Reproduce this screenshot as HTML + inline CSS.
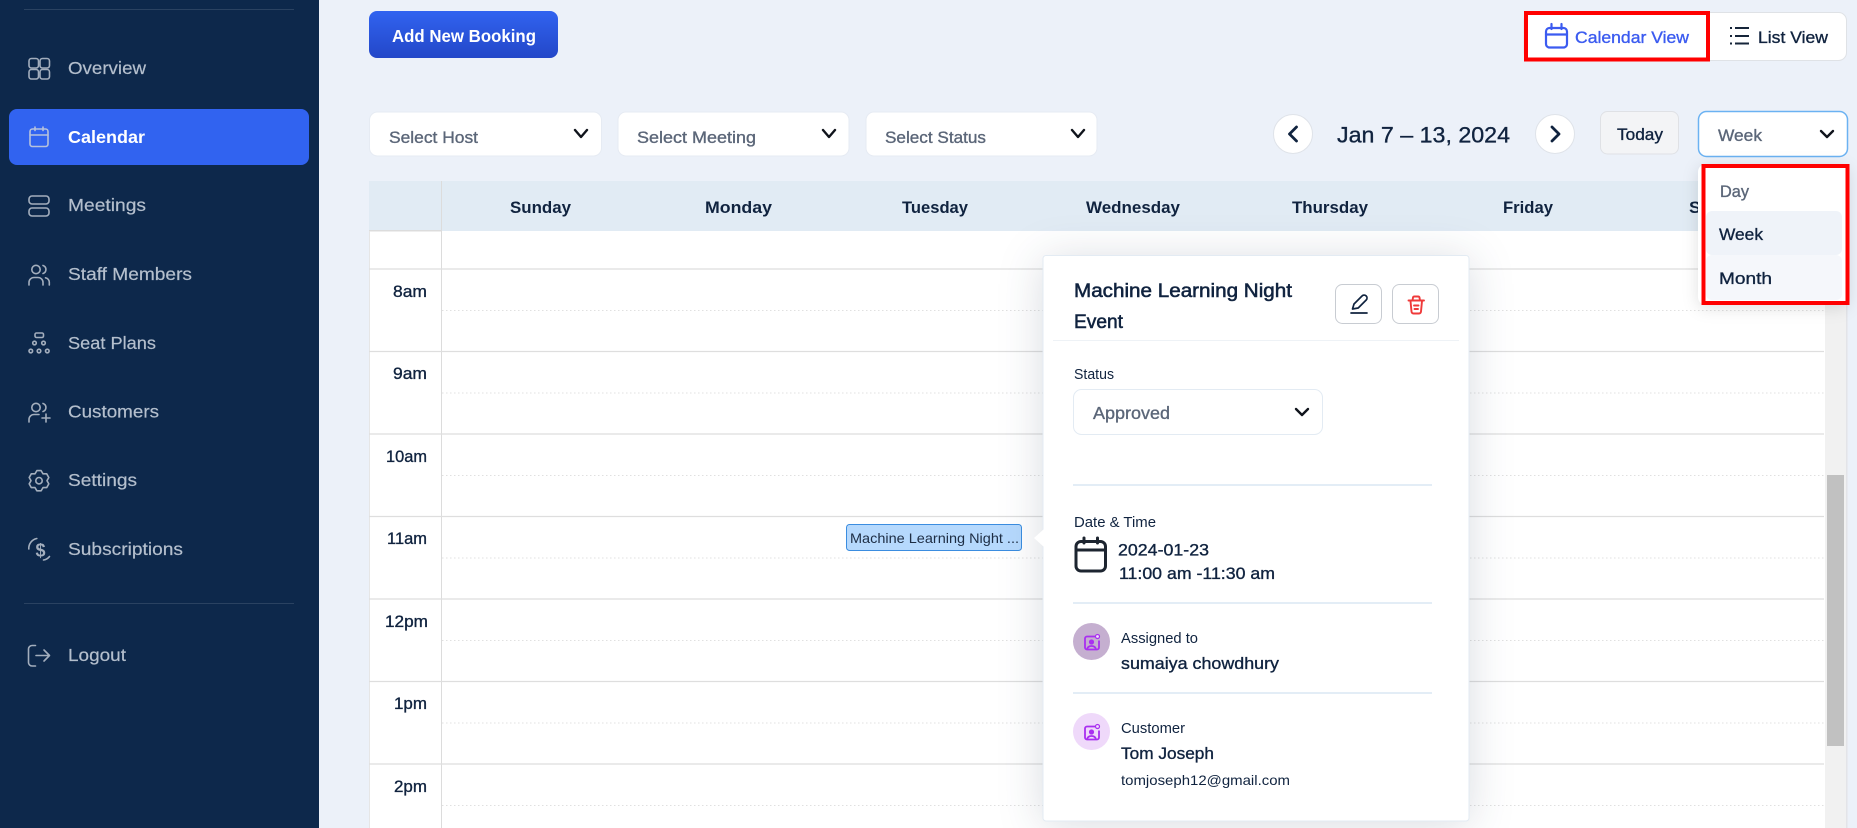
<!DOCTYPE html>
<html lang="en"><head><meta charset="utf-8"><title>Calendar</title>
<style>
html,body{margin:0;padding:0;width:1857px;height:828px;overflow:hidden;background:#ecf1f9}
svg{display:block}
text{font-family:"Liberation Sans",sans-serif;font-size:17px;fill:#10233f}
.n{fill:#b4bfcd;font-size:17.5px;stroke:#b4bfcd;stroke-width:.2}
.g{fill:#5b6678}
.m{stroke:currentColor;stroke-width:.35}
.t{stroke:currentColor;stroke-width:.55}
.b{font-weight:700}
.ic{fill:none;stroke:#a3aebd;stroke-width:1.6;stroke-linecap:round;stroke-linejoin:round}
.sol{stroke:#dedede;stroke-width:1.3}
.dot{stroke:#e0e0e0;stroke-width:1;stroke-dasharray:1.500 2.500}
.chev{fill:none;stroke:#10141c;stroke-width:2.400;stroke-linecap:round;stroke-linejoin:round}
</style></head><body>
<svg width="1857" height="828" viewBox="0 0 1857 828" xmlns="http://www.w3.org/2000/svg">
<rect width="1857" height="828" fill="#ecf1f9"/>

<!-- sidebar -->
<rect width="319" height="828" fill="#0d284b"/>
<rect x="24" y="9" width="270" height="1" fill="#2a4261"/>
<rect x="24" y="603" width="270" height="1" fill="#2a4261"/>
<rect x="9" y="109" width="300" height="56" rx="8" fill="#3163f0"/>

<g class="ic">
<rect x="29" y="58.5" width="9.5" height="9.5" rx="2.5"/><rect x="40" y="58.5" width="9.5" height="9.5" rx="2.5"/><rect x="29" y="69.5" width="9.5" height="9.5" rx="2.5"/><rect x="40" y="69.5" width="9.5" height="9.5" rx="2.5"/>
<g style="stroke:#b6c2dc"><rect x="30" y="129" width="18" height="17.5" rx="2.5"/><path d="M30 135h18M35 127v3.5M43 127v3.5"/></g>
<rect x="29" y="196" width="20" height="8" rx="3"/><rect x="29" y="208" width="20" height="8" rx="3"/>
<circle cx="36" cy="269.5" r="4.2"/><path d="M43 265.5a4.2 4.2 0 0 1 0 8M29 285v-2.5a5 5 0 0 1 5-5h4a5 5 0 0 1 5 5v2.5M45.500 277.800a4.500 4.500 0 0 1 3.800 4.500v2.700"/>
<rect x="35" y="333" width="8.500" height="4.500" rx="1.500"/><circle cx="34.500" cy="343" r="1.800"/><circle cx="43.500" cy="343" r="1.800"/><circle cx="30.800" cy="351" r="1.800"/><circle cx="39" cy="351" r="1.800"/><circle cx="47.300" cy="351" r="1.800"/>
<circle cx="36" cy="407.500" r="4.200"/><path d="M43 403.500a4.200 4.200 0 0 1 0 8M29 422v-2.500a5 5 0 0 1 5-5h5M46 414v8M42 418h8"/>
<g transform="translate(39 480.700)"><path d="M-2.100-10.100L2.100-10.100L4-6.900L7.700-6.900L9.800-3.200L8 0L9.800 3.200L7.700 6.900L4 6.900L2.100 10.100L-2.100 10.100L-4 6.900L-7.700 6.900L-9.800 3.200L-8 0L-9.800-3.200L-7.700-6.900L-4-6.900Z"/><circle r="3.200"/></g>
<path d="M28.800 549a10 10 0 0 1 8-10.500M43.500 560a9 9 0 0 0 6-3.500"/>
<path d="M35.500 645.500h-3.500a3.500 3.500 0 0 0-3.500 3.500v13.500a3.500 3.500 0 0 0 3.500 3.500h3.500M36 655.500h13.500M44 650l5.500 5.500-5.500 5.500"/>
</g>
<text x="35.500" y="556.500" style="font-size:18px;font-weight:700;fill:#a3aebd">$</text>

<text class="n" x="68" y="74" textLength="78" lengthAdjust="spacingAndGlyphs">Overview</text>
<text class="b" x="68" y="143" textLength="77" lengthAdjust="spacingAndGlyphs" style="fill:#fff;font-size:17.5px">Calendar</text>
<text class="n" x="68" y="211" textLength="78" lengthAdjust="spacingAndGlyphs">Meetings</text>
<text class="n" x="68" y="280" textLength="124" lengthAdjust="spacingAndGlyphs">Staff Members</text>
<text class="n" x="68" y="349" textLength="88" lengthAdjust="spacingAndGlyphs">Seat Plans</text>
<text class="n" x="68" y="417.500" textLength="91" lengthAdjust="spacingAndGlyphs">Customers</text>
<text class="n" x="68" y="486" textLength="69" lengthAdjust="spacingAndGlyphs">Settings</text>
<text class="n" x="68" y="555" textLength="115" lengthAdjust="spacingAndGlyphs">Subscriptions</text>
<text class="n" x="68" y="661" textLength="58" lengthAdjust="spacingAndGlyphs">Logout</text>

<!-- top bar -->
<defs><linearGradient id="bt" x1="0" y1="0" x2="0" y2="1"><stop offset="0" stop-color="#3163f0"/><stop offset="1" stop-color="#2347c8"/></linearGradient></defs>
<rect x="369" y="11" width="189" height="47" rx="8" fill="url(#bt)"/>
<text class="b" x="392" y="42" textLength="144" lengthAdjust="spacingAndGlyphs" style="fill:#fff;font-size:17.500px">Add New Booking</text>

<rect x="1524" y="12.500" width="322.500" height="48" rx="8" fill="#fff" stroke="#dfe2e6"/>
<rect x="1526" y="13" width="182" height="46.500" fill="#fff" stroke="#f00" stroke-width="4"/>
<g fill="none" stroke="#3b5bf0" stroke-width="2.200" stroke-linecap="round"><rect x="1546" y="28" width="21" height="19.500" rx="3.500"/><path d="M1546 34.500h21M1551.500 24v5M1561.500 24v5"/></g>
<text class="m" x="1575" y="43" textLength="114" lengthAdjust="spacingAndGlyphs" style="fill:#3b5bf0;color:#3b5bf0;font-size:17px">Calendar View</text>
<g fill="none" stroke="#16253a" stroke-width="2"><path d="M1735 28h14M1735 36h14M1735 43.500h14"/><path d="M1730 28h2M1730 36h2M1730 43.500h2"/></g>
<text class="m" x="1758" y="43" textLength="70" lengthAdjust="spacingAndGlyphs" style="color:#10233f;font-size:17px">List View</text>

<!-- filters -->
<g fill="#fff" stroke="#e6ebf3"><rect x="369.500" y="112" width="232" height="44" rx="8"/><rect x="618" y="112" width="231" height="44" rx="8"/><rect x="866" y="112" width="231" height="44" rx="8"/></g>
<text class="g m" x="389" y="143" textLength="89" lengthAdjust="spacingAndGlyphs" style="color:#5b6678">Select Host</text>
<text class="g m" x="637" y="143" textLength="119" lengthAdjust="spacingAndGlyphs" style="color:#5b6678">Select Meeting</text>
<text class="g m" x="885" y="143" textLength="101" lengthAdjust="spacingAndGlyphs" style="color:#5b6678">Select Status</text>
<path class="chev" d="M575 130l6 7 6-7M823 130l6 7 6-7M1072 130l6 7 6-7"/>

<!-- date nav -->
<circle cx="1293" cy="134" r="19.500" fill="#fff" stroke="#dfe3e9"/>
<path d="M1296.500 127l-7 7 7 7" fill="none" stroke="#10233f" stroke-width="2.800" stroke-linecap="round" stroke-linejoin="round"/>
<text class="m" x="1337" y="142.500" textLength="173" lengthAdjust="spacingAndGlyphs" style="font-size:22.500px;color:#10233f">Jan 7 – 13, 2024</text>
<circle cx="1555" cy="134" r="19.500" fill="#fff" stroke="#dfe3e9"/>
<path d="M1552 127l7 7-7 7" fill="none" stroke="#10233f" stroke-width="2.800" stroke-linecap="round" stroke-linejoin="round"/>
<rect x="1600.500" y="111.500" width="78" height="42.500" rx="7" fill="#f3f4f6" stroke="#dfe1e5"/>
<text class="m" x="1617" y="140" textLength="46" lengthAdjust="spacingAndGlyphs" style="color:#10233f">Today</text>
<rect x="1698.500" y="111.500" width="149" height="45" rx="8" fill="#fff" stroke="#6bb2f2" stroke-width="1.500"/>
<text class="g m" x="1718" y="141" textLength="44" lengthAdjust="spacingAndGlyphs" style="color:#5b6678">Week</text>
<path class="chev" d="M1821 131l6 6 6-6"/>

<!-- calendar -->
<rect x="369" y="231" width="1477" height="597" fill="#fff"/>
<rect x="369" y="181" width="1456" height="50" fill="#e1ebf4"/>
<rect x="1825" y="181" width="21" height="50" fill="#e1ebf4"/>
<rect x="369" y="230" width="72" height="1.500" fill="#dcdcdc"/>
<rect x="1825" y="231" width="21" height="597" fill="#f1f1f1"/>
<rect x="1827" y="475" width="17" height="271" fill="#c1c1c1"/>
<rect x="1846" y="231" width="1.500" height="597" fill="#e3e4e8"/>
<rect x="369" y="231" width="1" height="597" fill="#e6e6e6"/>
<rect x="441" y="181" width="1" height="647" fill="#dcdcdc"/>

<g class="sol"><path d="M369 269H1824M369 351.500H1824M369 434H1824M369 516.500H1824M369 599H1824M369 681.500H1824M369 764H1824"/></g>
<g class="dot"><path d="M442 310.500H1824M442 393H1824M442 475.500H1824M442 558H1824M442 640.500H1824M442 723H1824M442 805.500H1824"/></g>

<g class="b" style="font-size:17px">
<text class="b" x="510" y="213" textLength="61" lengthAdjust="spacingAndGlyphs">Sunday</text>
<text class="b" x="705" y="213" textLength="67" lengthAdjust="spacingAndGlyphs">Monday</text>
<text class="b" x="902" y="213" textLength="66" lengthAdjust="spacingAndGlyphs">Tuesday</text>
<text class="b" x="1086" y="213" textLength="94" lengthAdjust="spacingAndGlyphs">Wednesday</text>
<text class="b" x="1292" y="213" textLength="76" lengthAdjust="spacingAndGlyphs">Thursday</text>
<text class="b" x="1503" y="213" textLength="50" lengthAdjust="spacingAndGlyphs">Friday</text>
<text class="b" x="1689" y="213" textLength="76" lengthAdjust="spacingAndGlyphs">Saturday</text>
</g>
<g>
<text class="m" x="393" y="297" textLength="34" lengthAdjust="spacingAndGlyphs" style="color:#10233f">8am</text>
<text class="m" x="393" y="379" textLength="34" lengthAdjust="spacingAndGlyphs" style="color:#10233f">9am</text>
<text class="m" x="386" y="462" textLength="41" lengthAdjust="spacingAndGlyphs" style="color:#10233f">10am</text>
<text class="m" x="387" y="544" textLength="40" lengthAdjust="spacingAndGlyphs" style="color:#10233f">11am</text>
<text class="m" x="385" y="627" textLength="43" lengthAdjust="spacingAndGlyphs" style="color:#10233f">12pm</text>
<text class="m" x="394" y="709" textLength="33" lengthAdjust="spacingAndGlyphs" style="color:#10233f">1pm</text>
<text class="m" x="394" y="792" textLength="33" lengthAdjust="spacingAndGlyphs" style="color:#10233f">2pm</text>
</g>

<rect x="846.500" y="524.500" width="175" height="26" rx="3" fill="#b6d9fd" stroke="#3b8de0"/>
<text x="850" y="543" textLength="169" lengthAdjust="spacingAndGlyphs" style="font-size:14px;fill:#1d2d44">Machine Learning Night ...</text>

<!-- dropdown -->
<rect x="1698" y="164" width="150" height="141" rx="8" fill="#fff" style="filter:drop-shadow(0 3px 8px rgba(0,0,0,.12))"/>
<rect x="1706" y="211" width="136" height="44" rx="6" fill="#eff3f9"/>
<rect x="1706" y="255" width="136" height="45" rx="6" fill="#f5f7fb"/>
<rect x="1703.500" y="166" width="144" height="137" fill="none" stroke="#f00" stroke-width="4"/>
<text class="g m" x="1720" y="197" textLength="29" lengthAdjust="spacingAndGlyphs" style="color:#5b6678">Day</text>
<text class="m" x="1719" y="240" textLength="44" lengthAdjust="spacingAndGlyphs" style="color:#10233f">Week</text>
<text class="m" x="1719" y="284" textLength="53" lengthAdjust="spacingAndGlyphs" style="color:#10233f">Month</text>

<!-- popup -->
<rect x="1043" y="255.500" width="426" height="565.500" rx="3" fill="#fff" stroke="#e3ebf3" style="filter:drop-shadow(0 4px 22px rgba(20,40,70,.16))"/>
<path d="M1044 529l-10 9 10 9z" fill="#fff"/>
<text class="t" x="1074" y="297" textLength="218" lengthAdjust="spacingAndGlyphs" style="font-size:19.500px;color:#10233f">Machine Learning Night</text>
<text class="t" x="1074" y="328" textLength="49" lengthAdjust="spacingAndGlyphs" style="font-size:19.500px;color:#10233f">Event</text>
<rect x="1053" y="340" width="406" height="1" fill="#eef2f6"/>

<rect x="1335.500" y="284.500" width="46" height="39" rx="7" fill="#fff" stroke="#c8ccd2"/>
<rect x="1392.500" y="284.500" width="46" height="39" rx="7" fill="#fff" stroke="#c8ccd2"/>
<g fill="none" stroke="#10233f" stroke-width="1.700" stroke-linecap="round" stroke-linejoin="round"><path d="M1352.500 309l1.500-5 8-8a2.800 2.800 0 0 1 4.200 4l-8 8zM1351 313h16"/></g>
<g fill="none" stroke="#ef3a3a" stroke-width="1.900" stroke-linecap="round" stroke-linejoin="round"><path d="M1408.500 300.500h15.500M1412.500 300.500l.5-3a1.500 1.500 0 0 1 1.500-1h3.500a1.500 1.500 0 0 1 1.500 1l.5 3M1410.500 301l1 10.500a2 2 0 0 0 2 2h5.500a2 2 0 0 0 2-2l1-10.500M1414 305.500h4.500M1414.500 309h3.500"/></g>

<text x="1074" y="379" textLength="40" lengthAdjust="spacingAndGlyphs" style="font-size:15px">Status</text>
<rect x="1073.500" y="389.500" width="249" height="45" rx="8" fill="#fff" stroke="#e3ebf3"/>
<text class="g m" x="1093" y="419" textLength="77" lengthAdjust="spacingAndGlyphs" style="color:#5b6678;font-size:17.500px">Approved</text>
<path class="chev" d="M1296 409l6 6 6-6"/>
<rect x="1073" y="484" width="359" height="2" fill="#e3edf6"/>

<text x="1074" y="527" textLength="82" lengthAdjust="spacingAndGlyphs" style="font-size:15px">Date &amp; Time</text>
<g fill="none" stroke="#1d2530" stroke-width="3" stroke-linecap="round" stroke-linejoin="round"><rect x="1076" y="541.500" width="29.500" height="29.500" rx="5"/><path d="M1076 550h29.500M1084 538v5M1097.500 538v5"/></g>
<text class="m" x="1118" y="555.700" textLength="91" lengthAdjust="spacingAndGlyphs" style="color:#10233f">2024-01-23</text>
<text class="m" x="1119" y="579" textLength="156" lengthAdjust="spacingAndGlyphs" style="color:#10233f">11:00 am -11:30 am</text>
<rect x="1073" y="602" width="359" height="2" fill="#e3edf6"/>

<circle cx="1091.500" cy="641.500" r="18.500" fill="#c5afd0"/>
<g fill="none" stroke="#a92ff0" stroke-width="1.800"><path d="M1096 636.500h-9a2 2 0 0 0-2 2v9a2 2 0 0 0 2 2h10a2 2 0 0 0 2-2v-7"/><circle cx="1097.500" cy="636.500" r="2" fill="#f3e3fb" stroke-width="1.200"/><path d="M1087 649.500c.5-2.500 2-3.500 4.500-3.500s4 1 4.500 3.500"/></g>
<circle cx="1091.500" cy="642" r="2.600" fill="#a92ff0"/>
<text x="1121" y="643" textLength="77" lengthAdjust="spacingAndGlyphs" style="font-size:14.500px">Assigned to</text>
<text class="m" x="1121" y="669" textLength="158" lengthAdjust="spacingAndGlyphs" style="color:#10233f">sumaiya chowdhury</text>
<rect x="1073" y="692" width="359" height="2" fill="#e3edf6"/>

<circle cx="1091.500" cy="731.500" r="18.500" fill="#efd9fa"/>
<g fill="none" stroke="#a92ff0" stroke-width="1.800"><path d="M1096 726.500h-9a2 2 0 0 0-2 2v9a2 2 0 0 0 2 2h10a2 2 0 0 0 2-2v-7"/><circle cx="1097.500" cy="726.500" r="2" fill="#f3e3fb" stroke-width="1.200"/><path d="M1087 739.500c.5-2.500 2-3.500 4.500-3.500s4 1 4.500 3.500"/></g>
<circle cx="1091.500" cy="732" r="2.600" fill="#a92ff0"/>
<text x="1121" y="733" textLength="64" lengthAdjust="spacingAndGlyphs" style="font-size:14.500px">Customer</text>
<text class="m" x="1121" y="759" textLength="93" lengthAdjust="spacingAndGlyphs" style="color:#10233f">Tom Joseph</text>
<text x="1121" y="785" textLength="169" lengthAdjust="spacingAndGlyphs" style="font-size:14px">tomjoseph12@gmail.com</text>
</svg>
</body></html>
